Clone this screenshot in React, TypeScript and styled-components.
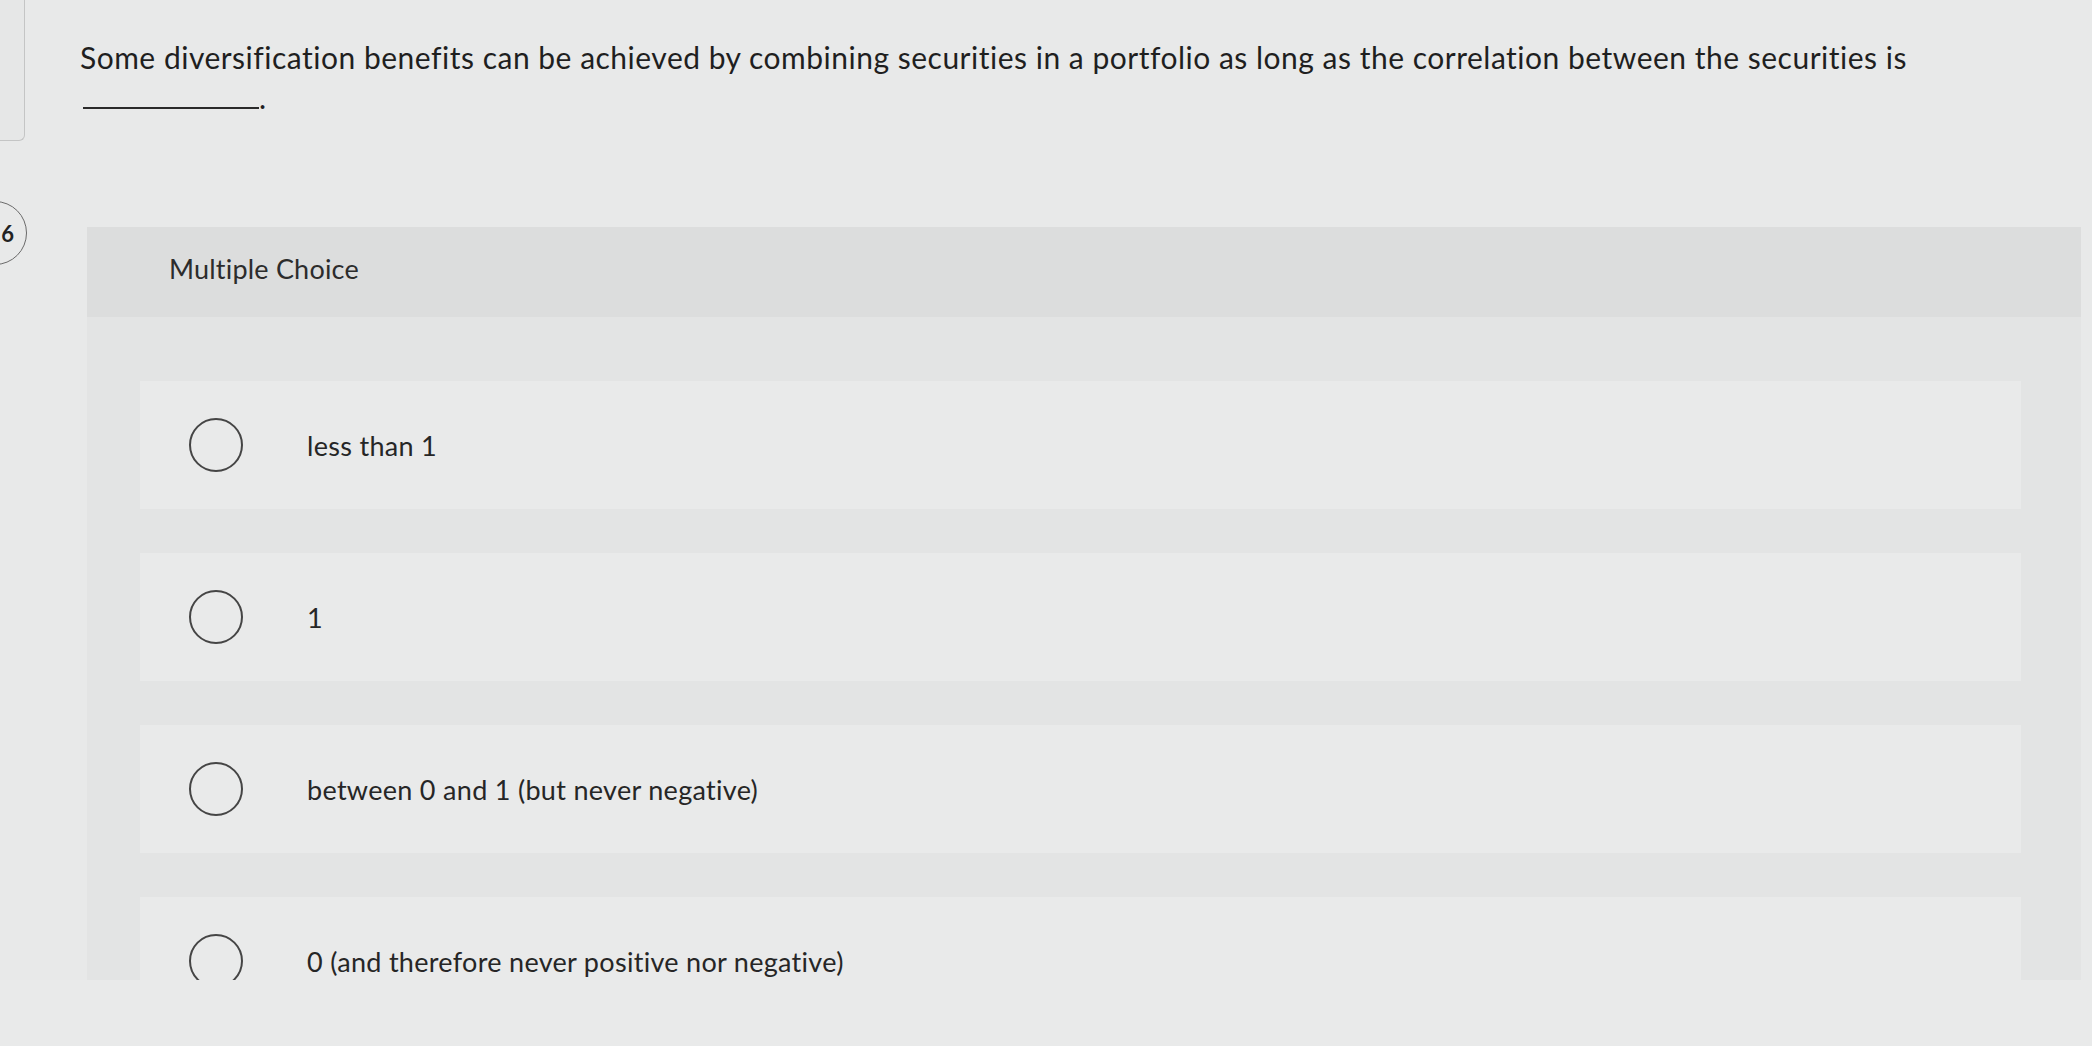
import { createGlobalStyle, styled } from "styled-components";

const choices = [
  "less than 1",
  "1",
  "between 0 and 1 (but never negative)",
  "0 (and therefore never positive nor negative)",
];

const GlobalStyle = createGlobalStyle`
  html, body {
    margin: 0;
    padding: 0;
    background: #e8e9e9;
  }
  body {
    font-family: Lato, "Open Sans", "Liberation Sans", sans-serif;
    color: #262626;
    overflow: hidden;
  }
`;

export default function App() {
  return (
    <>
      <GlobalStyle />
      <Page>
        <Screen>
          <Gutter>
            <SideTab />
            <NumberBadge>6</NumberBadge>
          </Gutter>

          <Main>
            <Question>
              Some diversification benefits can be achieved by combining
              securities in a portfolio as long as the correlation between the
              securities is
              <br />
              <Blank />.
            </Question>

            <ChoicePanel>
              <PanelHeader>Multiple Choice</PanelHeader>
              <ChoiceList>
                {choices.map((text) => (
                  <ChoiceRow key={text}>
                    <Radio />
                    <ChoiceLabel>{text}</ChoiceLabel>
                  </ChoiceRow>
                ))}
              </ChoiceList>
            </ChoicePanel>
          </Main>
        </Screen>
        <Footer />
      </Page>
    </>
  );
}

const Page = styled.div`
  width: 2092px;
  height: 1046px;
  display: flex;
  flex-direction: column;
  overflow: hidden;
`;

const Screen = styled.div`
  height: 980px;
  flex: none;
  display: grid;
  grid-template-columns: 80px 1fr;
  overflow: hidden;
`;

const Gutter = styled.div`
  display: flex;
  flex-direction: column;
  align-items: flex-start;
`;

const SideTab = styled.div`
  width: 24px;
  height: 140px;
  border-right: 1px solid #c4c5c5;
  border-bottom: 1px solid #c4c5c5;
  border-bottom-right-radius: 6px;
  background: #e6e7e7;
`;

const NumberBadge = styled.div`
  width: 64px;
  height: 64px;
  margin: 60px 0 0 -37px;
  padding-right: 12px;
  border: 1.5px solid #6a6a6a;
  border-radius: 50%;
  box-sizing: border-box;
  display: flex;
  align-items: center;
  justify-content: flex-end;
  font-size: 22px;
  font-weight: 700;
  color: #222;
`;

const Main = styled.div`
  display: flex;
  flex-direction: column;
  padding-right: 11px;
`;

const Question = styled.p`
  margin: 0;
  padding-top: 37px;
  font-size: 30px;
  letter-spacing: 0.5px;
  line-height: 40px;
  color: #1f1f1f;
  white-space: nowrap;
`;

const Blank = styled.span`
  display: inline-block;
  width: 176px;
  height: 20px;
  border-bottom: 2px solid #2a2a2a;
  margin-left: 3px;
`;

const ChoicePanel = styled.section`
  margin: 110px 0 0 7px;
  display: flex;
  flex-direction: column;
  background: #e3e4e4;
  flex: 1;
`;

const PanelHeader = styled.div`
  height: 90px;
  display: flex;
  align-items: center;
  padding: 0 0 8px 82px;
  box-sizing: border-box;
  background: #dcdddd;
  font-size: 27px;
  letter-spacing: 0.2px;
  color: #2c2c2c;
`;

const ChoiceList = styled.div`
  display: flex;
  flex-direction: column;
  gap: 44px;
  padding: 64px 60px 0 53px;
`;

const ChoiceRow = styled.label`
  height: 128px;
  display: flex;
  align-items: center;
  gap: 64px;
  padding-left: 49px;
  background: #e9eaea;
  flex: none;
`;

const Radio = styled.span`
  width: 54px;
  height: 54px;
  border: 2px solid #454545;
  border-radius: 50%;
  box-sizing: border-box;
  flex: none;
`;

const ChoiceLabel = styled.span`
  font-size: 27px;
  letter-spacing: 0.3px;
  color: #262626;
`;

const Footer = styled.div`
  flex: 1;
  background: #e9eaea;
`;
